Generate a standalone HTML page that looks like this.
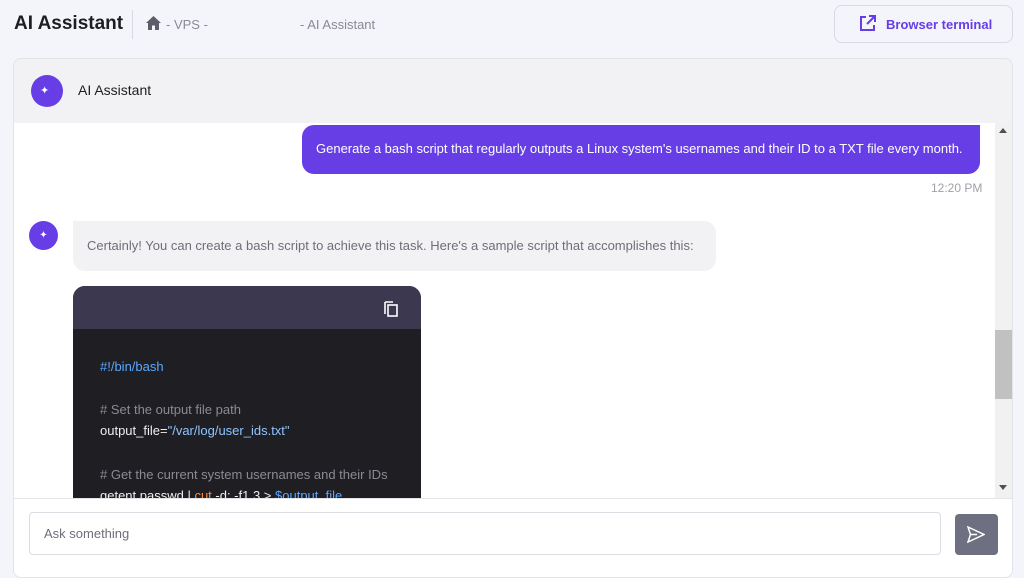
<!DOCTYPE html>
<html><head><meta charset="utf-8"><style>
*{box-sizing:border-box;margin:0;padding:0}
body{width:1024px;height:572px;overflow:hidden;background:#f4f4fb;font-family:"Liberation Sans",sans-serif;position:relative}
.abs{position:absolute}
</style></head><body>
<div class="abs" style="left:14px;top:13px;font-size:19px;font-weight:bold;color:#1d1e20">AI Assistant</div>
<div class="abs" style="left:132px;top:10px;width:1px;height:29px;background:#d8d8e0"></div>
<svg class="abs" style="left:146px;top:16px" width="15" height="14" viewBox="0 0 15 14"><path d="M7.5 0 L15 7 H13 V14 H9 V9.5 H6 V14 H2 V7 H0 Z" fill="#5c5c6b"/></svg>
<div class="abs" style="left:166px;top:17px;font-size:13px;color:#8a8a96">- VPS -</div>
<div class="abs" style="left:300px;top:17px;font-size:13px;color:#8a8a96">- AI Assistant</div>
<div class="abs" style="left:834px;top:5px;width:179px;height:38px;border:1px solid #d9d9e6;border-radius:8px;background:#f4f4fb"></div>
<svg class="abs" style="left:859px;top:15px" width="17" height="17" viewBox="0 0 17 17" fill="none" stroke="#673de6" stroke-width="2"><path d="M7 2H2V15H15V10M10 1H16V7M16 1L8 9"/></svg>
<div class="abs" style="left:886px;top:17px;font-size:13px;font-weight:bold;color:#673de6">Browser terminal</div>

<div class="abs" style="left:13px;top:58px;width:1000px;height:520px;border:1px solid #e3e3e8;border-radius:8px;background:#f2f2f5;overflow:hidden">
 <div class="abs" style="left:17px;top:16px;width:32px;height:32px;border-radius:50%;background:#673de6"></div>
 <div class="abs" style="left:26px;top:25px;color:#fff;font-size:11px">✦</div>
 <div class="abs" style="left:64px;top:23px;font-size:14px;color:#1d1e20">AI Assistant</div>
 <div class="abs" style="left:0;top:64px;width:1000px;height:375px;background:#fff;overflow:hidden">
  <div class="abs" style="left:288px;top:2px;width:678px;height:49px;background:#673de6;border-radius:12px 0 12px 12px;color:#fff;font-size:13px;padding:16px 0 0 14px;white-space:nowrap">Generate a bash script that regularly outputs a Linux system's usernames and their ID to a TXT file every month.</div>
  <div class="abs" style="left:917px;top:58px;font-size:12px;color:#a0a0aa">12:20 PM</div>
  <div class="abs" style="left:15px;top:98px;width:29px;height:29px;border-radius:50%;background:#673de6;color:#fff;font-size:10px;text-align:center;line-height:29px">✦</div>
  <div class="abs" style="left:59px;top:98px;width:643px;height:50px;background:#f2f2f5;border-radius:0 12px 12px 12px;font-size:13px;color:#6e6e7a;padding:17px 0 0 14px;white-space:nowrap">Certainly! You can create a bash script to achieve this task. Here's a sample script that accomplishes this:</div>
  <div class="abs" style="left:59px;top:163px;width:348px;height:300px;background:#1f1f23;border-radius:12px;overflow:hidden;font-size:13px">
   <div style="height:43px;background:#3b3850"></div>
   <svg class="abs" style="left:310px;top:13px" width="16" height="18" viewBox="0 0 16 18" fill="none" stroke="#fff" stroke-width="1.6"><path d="M2 3V15"/><path d="M2 3H10"/><rect x="5" y="6" width="9" height="11"/></svg>
   <div class="abs" style="left:27px;top:73px;color:#5aa7ff">#!/bin/bash</div>
   <div class="abs" style="left:27px;top:116px;color:#8a8a93"># Set the output file path</div>
   <div class="abs" style="left:27px;top:137px;color:#eee">output_file=<span style="color:#8ec5ff">"/var/log/user_ids.txt"</span></div>
   <div class="abs" style="left:27px;top:181px;color:#8a8a93"># Get the current system usernames and their IDs</div>
   <div class="abs" style="left:27px;top:202px;color:#eee">getent passwd | <span style="color:#ff8a3c">cut</span> -d: -f1,3 &gt; <span style="color:#5aa7ff">$output_file</span></div>
  </div>
  <div class="abs" style="left:981px;top:0;width:17px;height:375px;background:#f1f1f1"></div>
  <div class="abs" style="left:985px;top:5px;width:0;height:0;border-left:4px solid transparent;border-right:4px solid transparent;border-bottom:5px solid #505050"></div>
  <div class="abs" style="left:981px;top:207px;width:17px;height:69px;background:#c1c1c1"></div>
  <div class="abs" style="left:985px;top:362px;width:0;height:0;border-left:4px solid transparent;border-right:4px solid transparent;border-top:5px solid #505050"></div>
 </div>
 <div class="abs" style="left:0;top:439px;width:1000px;height:90px;background:#fff;border-top:1px solid #e3e3e8"></div>
 <div class="abs" style="left:15px;top:453px;width:912px;height:43px;border:1px solid #dcdce3;border-radius:4px;background:#fff;font-size:13px;color:#6e6e7a;padding:13px 0 0 14px">Ask something</div>
 <div class="abs" style="left:941px;top:455px;width:43px;height:41px;background:#6e7082;border-radius:4px"></div>
 <svg class="abs" style="left:953px;top:467px" width="18" height="17" viewBox="0 0 18 17" fill="none" stroke="#fff" stroke-width="1.5"><path d="M1 1L17 8.5L1 16L3.5 8.5Z M3.5 8.5H10"/></svg>
</div>
</body></html>
